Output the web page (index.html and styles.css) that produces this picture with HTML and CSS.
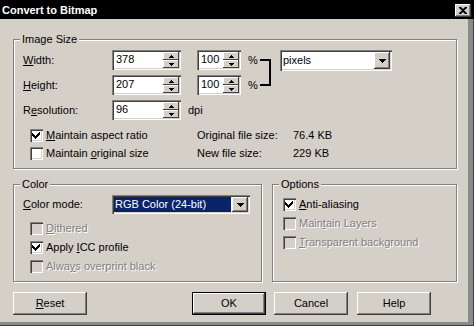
FILE: index.html
```html
<!DOCTYPE html>
<html lang="en">
<head>
<meta charset="utf-8">
<title>Convert to Bitmap</title>
<link rel="stylesheet" href="styles.css">
</head>
<body>
<div class="dialog">
  <div class="titlebar">
    <span class="title">Convert to Bitmap</span>
    <span class="close"><svg width="8" height="7" viewBox="0 0 8 7"><path d="M0 0h2l2 2 2-2h2v1L5 3.5 8 6v1H6L4 5 2 7H0V6l3-2.5L0 1z"/></svg></span>
  </div>
  <div class="main">
    <fieldset class="group size">
      <legend>Image Size</legend>
      <div class="size-grid">
        <span class="lbl r1"><u>W</u>idth:</span>
        <div class="field spin w69 r1 c2"><span class="val">378</span><span class="spinbtns"><span class="sb"><svg width="5" height="3" viewBox="0 0 5 3"><path d="M2 0h1v1h1v1h1v1H0V2h1V1h1z"/></svg></span><span class="sb"><svg width="5" height="3" viewBox="0 0 5 3"><path d="M0 0h5v1H4v1H3v1H2V2H1V1H0z"/></svg></span></span></div>
        <div class="field spin w44 r1 c3"><span class="val">100</span><span class="spinbtns"><span class="sb"><svg width="5" height="3" viewBox="0 0 5 3"><path d="M2 0h1v1h1v1h1v1H0V2h1V1h1z"/></svg></span><span class="sb"><svg width="5" height="3" viewBox="0 0 5 3"><path d="M0 0h5v1H4v1H3v1H2V2H1V1H0z"/></svg></span></span></div>
        <span class="pct r1">%</span>
        <span class="bracket"></span>
        <div class="field combo r1"><span class="val">pixels</span><span class="ddbtn"><svg width="7" height="4" viewBox="0 0 7 4"><path d="M0 0h7v1H6v1H5v1H4v1H3V3H2V2H1V1H0z"/></svg></span></div>

        <span class="lbl r2"><u>H</u>eight:</span>
        <div class="field spin w69 r2 c2"><span class="val">207</span><span class="spinbtns"><span class="sb"><svg width="5" height="3" viewBox="0 0 5 3"><path d="M2 0h1v1h1v1h1v1H0V2h1V1h1z"/></svg></span><span class="sb"><svg width="5" height="3" viewBox="0 0 5 3"><path d="M0 0h5v1H4v1H3v1H2V2H1V1H0z"/></svg></span></span></div>
        <div class="field spin w44 r2 c3"><span class="val">100</span><span class="spinbtns"><span class="sb"><svg width="5" height="3" viewBox="0 0 5 3"><path d="M2 0h1v1h1v1h1v1H0V2h1V1h1z"/></svg></span><span class="sb"><svg width="5" height="3" viewBox="0 0 5 3"><path d="M0 0h5v1H4v1H3v1H2V2H1V1H0z"/></svg></span></span></div>
        <span class="pct r2">%</span>

        <span class="lbl r3">R<u>e</u>solution:</span>
        <div class="res r3">
          <div class="field spin w69"><span class="val">96</span><span class="spinbtns"><span class="sb"><svg width="5" height="3" viewBox="0 0 5 3"><path d="M2 0h1v1h1v1h1v1H0V2h1V1h1z"/></svg></span><span class="sb"><svg width="5" height="3" viewBox="0 0 5 3"><path d="M0 0h5v1H4v1H3v1H2V2H1V1H0z"/></svg></span></span></div>
          <span class="unit">dpi</span>
        </div>
      </div>
      <div class="info">
        <span class="check"><span class="box"><svg width="9" height="9" viewBox="0 0 9 9"><path d="M7 1h1v3H7v1H6v1H5v1H4v1H3V7H2V6H1V5H0V2h1v1h1v1h1v1h1V4h1V3h1V2h1z"/></svg></span><span><u>M</u>aintain aspect ratio</span></span>
        <span>Original file size:</span>
        <span>76.4 KB</span>
        <span class="check"><span class="box"></span><span>Maintain <u>o</u>riginal size</span></span>
        <span>New file size:</span>
        <span>229 KB</span>
      </div>
    </fieldset>

    <div class="lower">
      <fieldset class="group color">
        <legend>Color</legend>
        <div class="mode-row">
          <span class="mode-lbl"><u>C</u>olor mode:</span>
          <div class="field select"><span class="sel-text">RGB Color (24-bit)</span><span class="ddbtn"><svg width="7" height="4" viewBox="0 0 7 4"><path d="M0 0h7v1H6v1H5v1H4v1H3V3H2V2H1V1H0z"/></svg></span></div>
        </div>
        <div class="checks color-checks">
          <span class="check dis"><span class="box off"></span><span><u>D</u>ithered</span></span>
          <span class="check"><span class="box"><svg width="9" height="9" viewBox="0 0 9 9"><path d="M7 1h1v3H7v1H6v1H5v1H4v1H3V7H2V6H1V5H0V2h1v1h1v1h1v1h1V4h1V3h1V2h1z"/></svg></span><span>Apply <u>I</u>CC profile</span></span>
          <span class="check dis"><span class="box off"></span><span>Alwa<u>y</u>s overprint black</span></span>
        </div>
      </fieldset>
      <fieldset class="group options">
        <legend>Options</legend>
        <div class="checks opt-checks">
          <span class="check"><span class="box"><svg width="9" height="9" viewBox="0 0 9 9"><path d="M7 1h1v3H7v1H6v1H5v1H4v1H3V7H2V6H1V5H0V2h1v1h1v1h1v1h1V4h1V3h1V2h1z"/></svg></span><span><u>A</u>nti-aliasing</span></span>
          <span class="check dis"><span class="box off"></span><span>Main<u>t</u>ain Layers</span></span>
          <span class="check dis"><span class="box off"></span><span><u>T</u>ransparent background</span></span>
        </div>
      </fieldset>
    </div>

    <div class="buttons">
      <button class="btn"><u>R</u>eset</button>
      <button class="btn default ok">OK</button>
      <button class="btn cancel">Cancel</button>
      <button class="btn help">Help</button>
    </div>
  </div>
</div>
</body>
</html>
```

FILE: styles.css
```css
* { box-sizing: border-box; }
html, body { margin: 0; padding: 0; }
body {
  width: 474px;
  height: 326px;
  overflow: hidden;
  background: #d4d0c8;
  font-family: "Liberation Sans", Arial, sans-serif;
  font-size: 11px;
  line-height: 13px;
  color: #000;
}
u { text-decoration: underline; text-underline-offset: 1px; }

.dialog {
  width: 474px;
  height: 326px;
  display: flex;
  flex-direction: column;
  background: #d4d0c8;
}

.titlebar {
  height: 19px;
  flex: none;
  background: #000;
  color: #fff;
  font-weight: bold;
  display: flex;
  align-items: center;
  padding: 2px 3px 0 2px;
}
.title { flex: 1; }
.close {
  width: 16px;
  height: 13px;
  background: #d4d0c8;
  box-shadow: inset -1px -1px #404040, inset 1px 1px #fff, inset -2px -2px #808080;
  display: flex;
  align-items: center;
  justify-content: center;
}
.close svg { display: block; fill: #000; }

.main {
  flex: 1;
  padding: 14px 17px 0 13px;
  box-shadow: inset -1px -1px #404040, inset -6px -4px #8a8a8a;
}

/* group boxes */
fieldset.group {
  margin: 0;
  padding: 4px 9px 0 9px;
  border: 1px solid #808080;
  box-shadow: 1px 1px 0 #fff, inset 1px 1px 0 #fff;
  min-width: 0;
}
fieldset.group legend {
  margin-left: -3px;
  padding: 0 2px;
  line-height: 13px;
  background: #d4d0c8;
}
.size { height: 136px; }

/* sunken fields */
.field {
  background: #fff;
  box-shadow: inset 1px 1px #808080, inset 2px 2px #404040, inset -1px -1px #fff, inset -2px -2px #d4d0c8;
}
.raised {
  background: #d4d0c8;
}

.size-grid {
  display: grid;
  grid-template-columns: 89px 85px 44px 19px 20px 112px;
  grid-template-rows: 20px 20px 20px;
  row-gap: 5px;
  align-items: center;
}
.r1 { grid-row: 1; }
.r2 { grid-row: 2; }
.r3 { grid-row: 3; }
.c2 { grid-column: 2; }
.c3 { grid-column: 3; }
.lbl { grid-column: 1; }
.pct { grid-column: 4; padding-left: 7px; }

.spin {
  height: 20px;
  display: flex;
  align-items: stretch;
  padding: 2px;
}
.w69 { width: 69px; }
.w44 { width: 44px; }
.val { flex: 1; padding-left: 2px; line-height: 15px; }
.spinbtns {
  width: 16px;
  display: flex;
  flex-direction: column;
}
.sb {
  flex: 1;
  display: flex;
  align-items: center;
  justify-content: center;
  background: #d4d0c8;
  box-shadow: inset -1px -1px #404040, inset 1px 1px #fff;
}
.sb svg, .ddbtn svg, .box svg { display: block; fill: #000; }

.bracket {
  grid-column: 5;
  grid-row: 1 / 3;
  align-self: center;
  width: 11px;
  height: 27px;
  border: 2px solid #000;
  border-left: none;
}

.combo {
  grid-column: 6;
  align-self: start;
  height: 21px;
  width: 112px;
  display: flex;
  padding: 2px;
}
.combo .val { line-height: 17px; padding-left: 1px; }
.ddbtn {
  width: 16px;
  display: flex;
  align-items: center;
  justify-content: center;
  background: #d4d0c8;
  box-shadow: inset -1px -1px #404040, inset 1px 1px #fff, inset -2px -2px #808080;
}

.res {
  grid-column: 2 / 5;
  display: flex;
  align-items: center;
}
.unit { margin-left: 7px; }

.info {
  display: grid;
  grid-template-columns: 167px 96px auto;
  grid-auto-rows: 13px;
  row-gap: 5px;
  margin-top: 9px;
  padding-left: 7px;
  align-items: center;
}

.check {
  display: flex;
  align-items: center;
  gap: 3px;
}
.box {
  width: 13px;
  height: 13px;
  flex: none;
  padding: 2px;
  background: #fff;
  box-shadow: inset 1px 1px #808080, inset 2px 2px #404040, inset -1px -1px #fff, inset -2px -2px #d4d0c8;
}
.box.off { background: #d4d0c8; }
.dis { color: #808080; text-shadow: 1px 1px 0 #fff; }

/* lower groups */
.lower {
  display: flex;
  gap: 10px;
  margin-top: 9px;
}
.color { width: 249px; height: 104px; padding-top: 3px; }
.options { width: 185px; height: 104px; padding-top: 3px; }

.mode-row {
  display: flex;
  align-items: center;
}
.mode-lbl { width: 89px; }
.select {
  width: 138px;
  height: 19px;
  display: flex;
  padding: 2px;
}
.sel-text {
  flex: 1;
  background: #0a246a;
  color: #fff;
  padding-left: 1px;
  line-height: 15px;
  margin-right: 1px;
}

.checks {
  display: flex;
  flex-direction: column;
  gap: 6px;
}
.color-checks { margin-top: 8px; padding-left: 7px; }
.opt-checks { margin-top: 3px; padding-left: 1px; }

.buttons {
  display: flex;
  margin-top: 10px;
  padding-right: 26px;
}
.btn {
  width: 74px;
  height: 23px;
  padding: 0;
  border: none;
  font: inherit;
  color: #000;
  background: #d4d0c8;
  box-shadow: inset -1px -1px #404040, inset 1px 1px #fff, inset -2px -2px #808080;
}
.btn.default {
  box-shadow: inset 0 0 0 1px #000, inset -2px -2px #404040, inset 2px 2px #fff, inset -3px -3px #808080;
}
.ok { margin-left: auto; }
.cancel { margin-left: 8px; }
.help { margin-left: 9px; }
```
